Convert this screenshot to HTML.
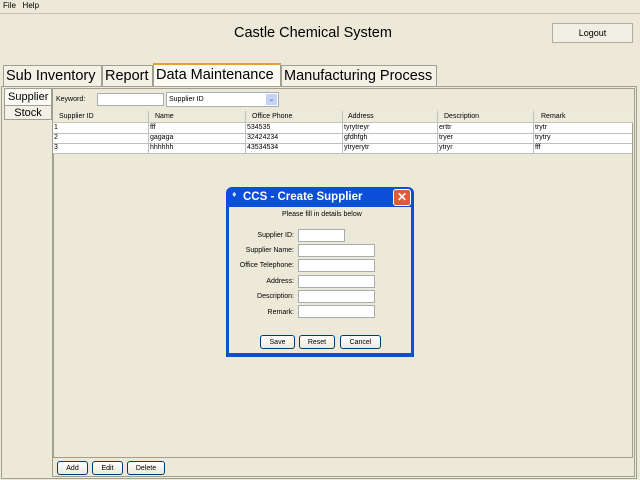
<!DOCTYPE html>
<html><head><style>
*{box-sizing:border-box;margin:0;padding:0}
body{width:640px;height:480px;background:#ece9d8;font-family:"Liberation Sans",sans-serif;position:relative;overflow:hidden;color:#000}
.a{position:absolute}
.s{font-size:8px}
.tab{position:absolute;top:65px;height:21px;border:1px solid #a0a090;border-bottom:none;background:#f3f1e6;font-size:14.5px;line-height:21px;padding-left:2px;white-space:nowrap;overflow:hidden}
.inp{position:absolute;background:#fff;border:1px solid #a5acb2}
.btn{position:absolute;border:1px solid #003c74;border-radius:3px;background:linear-gradient(#fff,#ece9d8);font-size:7px;text-align:center;line-height:13px}
.td{position:absolute;font-size:7px;line-height:10px;padding-left:1px;white-space:nowrap}
.lbl{position:absolute;right:346px;font-size:7px;text-align:right;white-space:nowrap}
</style></head><body>
<div class="a s" style="left:3px;top:1px">File&nbsp;&nbsp; Help</div>
<div class="a" style="left:0;top:13px;width:640px;border-top:1px solid #c8c5b5"></div>
<div class="a" style="left:234px;top:25px;font-size:14.5px">Castle Chemical System</div>
<div class="a" style="left:552px;top:23px;width:81px;height:20px;border:1px solid #b0ad9d;background:#f1efe4;font-size:9px;text-align:center;line-height:18px">Logout</div>

<div class="tab" style="left:3px;width:99px">Sub Inventory</div>
<div class="tab" style="left:102px;width:51px">Report</div>
<div class="tab" style="left:153px;top:63px;height:24px;width:128px;background:#fbfaf5;border-top:2px solid #e8a030;line-height:21px">Data Maintenance</div>
<div class="tab" style="left:281px;width:156px">Manufacturing Process</div>

<div class="a" style="left:1px;top:86px;width:636px;height:393px;border:1px solid #a0a090"></div>
<div class="a" style="left:4px;top:88px;width:48px;height:18px;background:#fbfaf5;border:1px solid #a0a090;font-size:11px;padding-left:3px;line-height:17px">Supplier</div>
<div class="a" style="left:4px;top:105px;width:48px;height:15px;background:#f3f1e6;border:1px solid #a0a090;font-size:11px;text-align:center;line-height:14px">Stock</div>
<div class="a" style="left:52px;top:88px;width:583px;height:389px;border:1px solid #a0a090"></div>

<div class="a" style="left:56px;top:96px;font-size:7px">Keyword:</div>
<div class="inp" style="left:97px;top:93px;width:67px;height:13px"></div>
<div class="inp" style="left:166px;top:92px;width:113px;height:15px;font-size:7px;padding:3px 2px;background:#fff">Supplier ID
<div class="a" style="right:1px;top:1px;width:11px;height:11px;background:#c4d3f5;font-size:7px;color:#4d6185;text-align:center;line-height:11px">⌄</div></div>

<div class="a" style="left:53px;top:111px;width:580px;height:347px;border:1px solid #a0a090;border-top:none"></div>
<div class="a" style="left:53px;top:111px;width:580px;height:12px;background:#ebeadb;border-bottom:1px solid #c8c5b5"></div>
<div class="a" style="left:53px;top:123px;width:579px;height:31px;background:#fff"></div>

<div class="td" style="left:58px;top:112px">Supplier ID</div>
<div class="td" style="left:154px;top:112px">Name</div>
<div class="td" style="left:251px;top:112px">Office Phone</div>
<div class="td" style="left:347px;top:112px">Address</div>
<div class="td" style="left:443px;top:112px">Description</div>
<div class="td" style="left:540px;top:112px">Remark</div>
<div class="a" style="left:148px;top:111px;height:43px;border-left:1px solid #c0c0c0"></div>
<div class="a" style="left:245px;top:111px;height:43px;border-left:1px solid #c0c0c0"></div>
<div class="a" style="left:342px;top:111px;height:43px;border-left:1px solid #c0c0c0"></div>
<div class="a" style="left:437px;top:111px;height:43px;border-left:1px solid #c0c0c0"></div>
<div class="a" style="left:533px;top:111px;height:43px;border-left:1px solid #c0c0c0"></div>
<div class="a" style="left:53px;top:133px;width:579px;border-top:1px solid #c0c0c0"></div>
<div class="a" style="left:53px;top:143px;width:579px;border-top:1px solid #c0c0c0"></div>
<div class="a" style="left:53px;top:153px;width:579px;border-top:1px solid #c0c0c0"></div>

<div class="td" style="left:53px;top:123px">1</div><div class="td" style="left:149px;top:123px">fff</div><div class="td" style="left:246px;top:123px">534535</div><div class="td" style="left:343px;top:123px">tyrytreyr</div><div class="td" style="left:438px;top:123px">erttr</div><div class="td" style="left:534px;top:123px">trytr</div>
<div class="td" style="left:53px;top:133px">2</div><div class="td" style="left:149px;top:133px">gagaga</div><div class="td" style="left:246px;top:133px">32424234</div><div class="td" style="left:343px;top:133px">gfdhfgh</div><div class="td" style="left:438px;top:133px">tryer</div><div class="td" style="left:534px;top:133px">trytry</div>
<div class="td" style="left:53px;top:143px">3</div><div class="td" style="left:149px;top:143px">hhhhhh</div><div class="td" style="left:246px;top:143px">43534534</div><div class="td" style="left:343px;top:143px">ytryerytr</div><div class="td" style="left:438px;top:143px">ytryr</div><div class="td" style="left:534px;top:143px">fff</div>

<div class="btn" style="left:57px;top:461px;width:31px;height:14px">Add</div>
<div class="btn" style="left:92px;top:461px;width:31px;height:14px">Edit</div>
<div class="btn" style="left:127px;top:461px;width:38px;height:14px">Delete</div>

<!-- dialog -->
<div class="a" style="left:226px;top:187px;width:188px;height:170px;background:#0a4fd8;border-radius:6px 6px 0 0"></div>
<div class="a" style="left:229px;top:207px;width:182px;height:146px;background:#ece9d8"></div>
<div class="a" style="left:232px;top:189px;color:#c8d8ff;font-size:9px">♦</div>
<div class="a" style="left:243px;top:191px;color:#fff;font-size:11.5px;font-weight:bold">CCS - Create Supplier</div>
<div class="a" style="left:393px;top:189px;width:18px;height:17px;background:#e05a3a;border:1px solid #fff;border-radius:3px;color:#fff;font-size:12px;text-align:center;line-height:15px;font-weight:bold">✕</div>
<div class="a" style="left:282px;top:211px;font-size:7px">Please fill in details below</div>
<div class="lbl" style="top:232px">Supplier ID:</div>
<div class="lbl" style="top:247px">Supplier Name:</div>
<div class="lbl" style="top:262px">Office Telephone:</div>
<div class="lbl" style="top:278px">Address:</div>
<div class="lbl" style="top:293px">Description:</div>
<div class="lbl" style="top:309px">Remark:</div>
<div class="inp" style="left:298px;top:229px;width:47px;height:13px"></div>
<div class="inp" style="left:298px;top:244px;width:77px;height:13px"></div>
<div class="inp" style="left:298px;top:259px;width:77px;height:13px"></div>
<div class="inp" style="left:298px;top:275px;width:77px;height:13px"></div>
<div class="inp" style="left:298px;top:290px;width:77px;height:13px"></div>
<div class="inp" style="left:298px;top:305px;width:77px;height:13px"></div>
<div class="btn" style="left:260px;top:335px;width:35px;height:14px">Save</div>
<div class="btn" style="left:299px;top:335px;width:36px;height:14px">Reset</div>
<div class="btn" style="left:340px;top:335px;width:41px;height:14px">Cancel</div>
</body></html>
